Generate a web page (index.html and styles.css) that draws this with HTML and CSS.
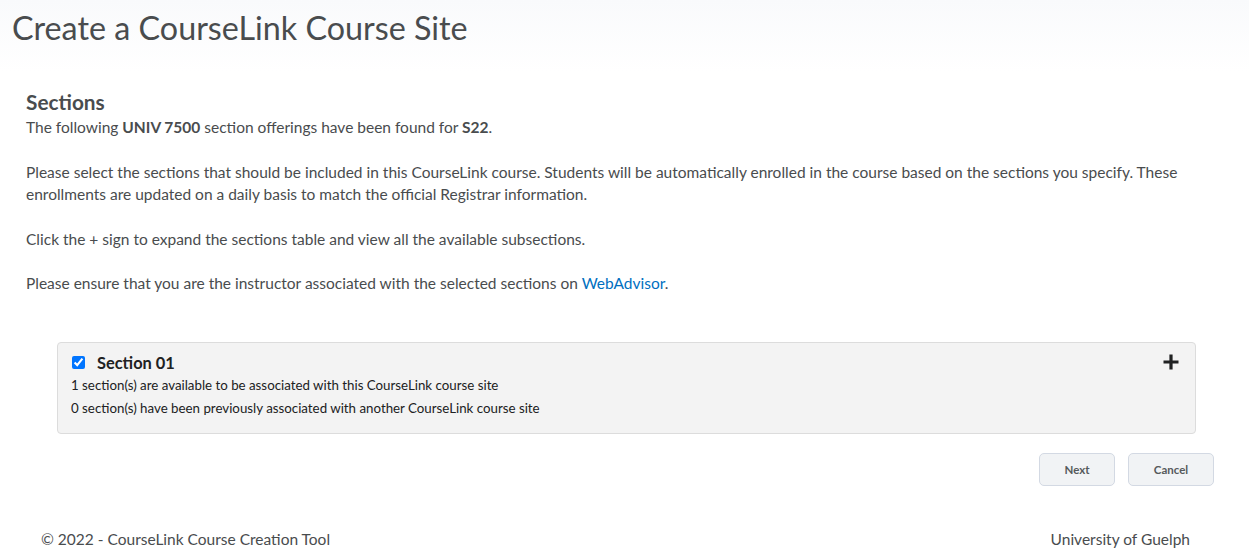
FILE: index.html
```html
<!DOCTYPE html>
<html lang="en">
<head>
    <meta charset="UTF-8">
    <meta name="viewport" content="width=device-width, initial-scale=1.0">
    <title>Create a CourseLink Course Site</title>
    <link rel="stylesheet" href="styles.css">
</head>
<body>
    <div class="header">
        <h1>Create a CourseLink Course Site</h1>
    </div>

    <div class="content">
        <h2>Sections</h2>
        <p>The following <strong>UNIV 7500</strong> section offerings have been found for <strong>S22</strong>.</p>
        <p>Please select the sections that should be included in this CourseLink course. Students will be automatically enrolled in the course based on the sections you specify. These enrollments are updated on a daily basis to match the official Registrar information.</p>
        <p>Click the + sign to expand the sections table and view all the available subsections.</p>
        <p>Please ensure that you are the instructor associated with the selected sections on <a href="#">WebAdvisor</a>.</p>

        <div class="section-box">
            <div class="section-head">
                <label class="section-title">
                    <input type="checkbox" checked>
                    <span>Section 01</span>
                </label>
                <button class="expand" aria-label="Expand">
                    <svg width="16" height="16" viewBox="0 0 16 16">
                        <path d="M8 0.5v15M0.5 8h15" stroke="#202122" stroke-width="3.2" fill="none"/>
                    </svg>
                </button>
            </div>
            <div class="section-info">1 section(s) are available to be associated with this CourseLink course site</div>
            <div class="section-info">0 section(s) have been previously associated with another CourseLink course site</div>
        </div>

        <div class="actions">
            <button class="button next">Next</button>
            <button class="button cancel">Cancel</button>
        </div>
    </div>

    <div class="footer">
        <span>© 2022 - CourseLink Course Creation Tool</span>
        <span>University of Guelph</span>
    </div>
</body>
</html>
```

FILE: styles.css
```css
body {
    font-family: Lato, "Open Sans", sans-serif;
    color: #494c4e;
    margin: 0;
    background: white;
}
.header {
    background: linear-gradient(180deg, #f9fafc 0%, #ffffff 100%);
    padding: 9px 12px 0;
    height: 63px;
}
.header h1 {
    margin: 0;
    font-size: 32.3px;
    font-weight: 400;
    line-height: 38px;
    color: #494c4e;
}
.content {
    padding: 15px 26px 0;
}
h2 {
    margin: 0;
    font-size: 20.8px;
    font-weight: 700;
    line-height: 29px;
}
p {
    margin: 0 0 22px;
    font-size: 15.5px;
    line-height: 22.5px;
}
a {
    color: #006fbf;
    text-decoration: none;
}
.section-box {
    background: #f3f3f3;
    border: 1px solid #dcdcdc;
    border-radius: 4px;
    margin: 47px 27px 0 31px;
    padding: 9px 13px 13px;
}
.section-head {
    display: flex;
    justify-content: space-between;
    align-items: center;
    height: 22px;
}
.section-title {
    display: flex;
    align-items: center;
    font-size: 16.4px;
    font-weight: 700;
    color: #202122;
}
.section-title input {
    margin: 0 12px 0 1px;
    width: 13px;
    height: 13px;
}
.expand {
    background: none;
    border: none;
    padding: 0;
    margin: -2px 3px 0 0;
    line-height: 0;
    cursor: pointer;
}
.section-info {
    font-size: 13.3px;
    line-height: 23px;
    color: #202122;
}
.actions {
    display: flex;
    justify-content: flex-end;
    gap: 13px;
    margin: 19px 9px 0 0;
}
.button {
    font-family: Lato, sans-serif;
    font-size: 11.5px;
    font-weight: 700;
    color: #565a5c;
    background: #f1f3f5;
    border: 1px solid #d3d9e3;
    border-radius: 5px;
    height: 33px;
    cursor: pointer;
}
.next {
    width: 76px;
}
.cancel {
    width: 86px;
}
.footer {
    display: flex;
    justify-content: space-between;
    padding: 43px 59px 0 41px;
    font-size: 15.5px;
    line-height: 20px;
}
```
